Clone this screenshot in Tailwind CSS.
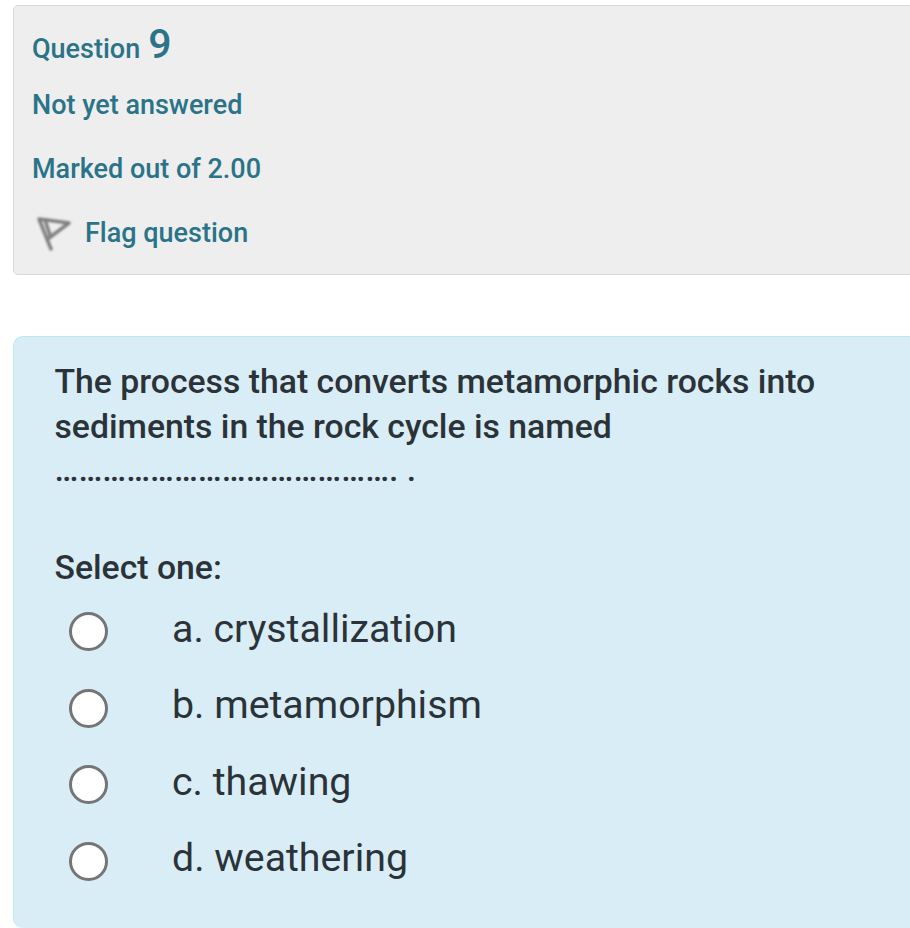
<!DOCTYPE html>
<html lang="en">
<head>
  <meta charset="UTF-8">
  <title>Question 9</title>
  <script src="https://cdn.jsdelivr.net/npm/@tailwindcss/browser@4"></script>
</head>
<body class="bg-white h-[928px] overflow-hidden font-['Roboto',sans-serif]">
  <div class="pl-[13px] pt-[5px] w-[930px]">
    <!-- info -->
    <div class="bg-[#eeeeee] border border-[#d9d9d9] rounded-[5px] h-[270px] pl-[18px] text-[#2a7388] text-[27px] font-medium">
      <div class="flex items-baseline h-[66px] pt-[16px]">
        <span>Question</span>
        <span class="ml-[8px] text-[41px] leading-[45px] font-medium">9</span>
      </div>
      <div class="h-[64px] leading-[64px] mt-[1px]">Not yet answered</div>
      <div class="h-[64px] leading-[64px]">Marked out of 2.00</div>
      <div class="flex items-center h-[64px]">
        <svg class="w-[36px] h-[38px] ml-[3px] blur-[0.8px]" viewBox="0 0 36 38" fill="none" stroke="#808080" stroke-width="3.5" stroke-linejoin="round" stroke-linecap="round">
          <path d="M4 5 L16 35 M4 5 L34 9 L14 24 M10 6 L15 21" />
        </svg>
        <span class="ml-[14px]">Flag question</span>
      </div>
    </div>

    <!-- question -->
    <div class="mt-[61px] bg-[#d9edf6] border border-b-0 border-[#bce8f1] rounded-[10px] h-[592px] pl-[40.5px] text-[#2c3338]">
      <div class="pt-[22px] text-[33.75px] leading-[45px] font-medium">
        <p>The process that converts metamorphic rocks into<br>sediments in the rock cycle is named</p>
        <p class="-mt-[2px]">…………………………………….  .</p>
      </div>
      <p class="mt-[53px] text-[33.75px] leading-[45px] font-medium">Select one:</p>
      <div class="mt-[1px] text-[39.3px]">
        <label class="flex items-center h-[76.5px]">
          <span class="ml-[14.5px] mt-[5px] w-[39px] h-[39px] rounded-full bg-white border-[3px] border-[#757575]"></span>
          <span class="ml-[64px]">a. crystallization</span>
        </label>
        <label class="flex items-center h-[76.5px]">
          <span class="ml-[14.5px] mt-[5px] w-[39px] h-[39px] rounded-full bg-white border-[3px] border-[#757575]"></span>
          <span class="ml-[64px]">b. metamorphism</span>
        </label>
        <label class="flex items-center h-[76.5px]">
          <span class="ml-[14.5px] mt-[5px] w-[39px] h-[39px] rounded-full bg-white border-[3px] border-[#757575]"></span>
          <span class="ml-[64px]">c. thawing</span>
        </label>
        <label class="flex items-center h-[76.5px]">
          <span class="ml-[14.5px] mt-[5px] w-[39px] h-[39px] rounded-full bg-white border-[3px] border-[#757575]"></span>
          <span class="ml-[64px]">d. weathering</span>
        </label>
      </div>
    </div>
  </div>
</body>
</html>
